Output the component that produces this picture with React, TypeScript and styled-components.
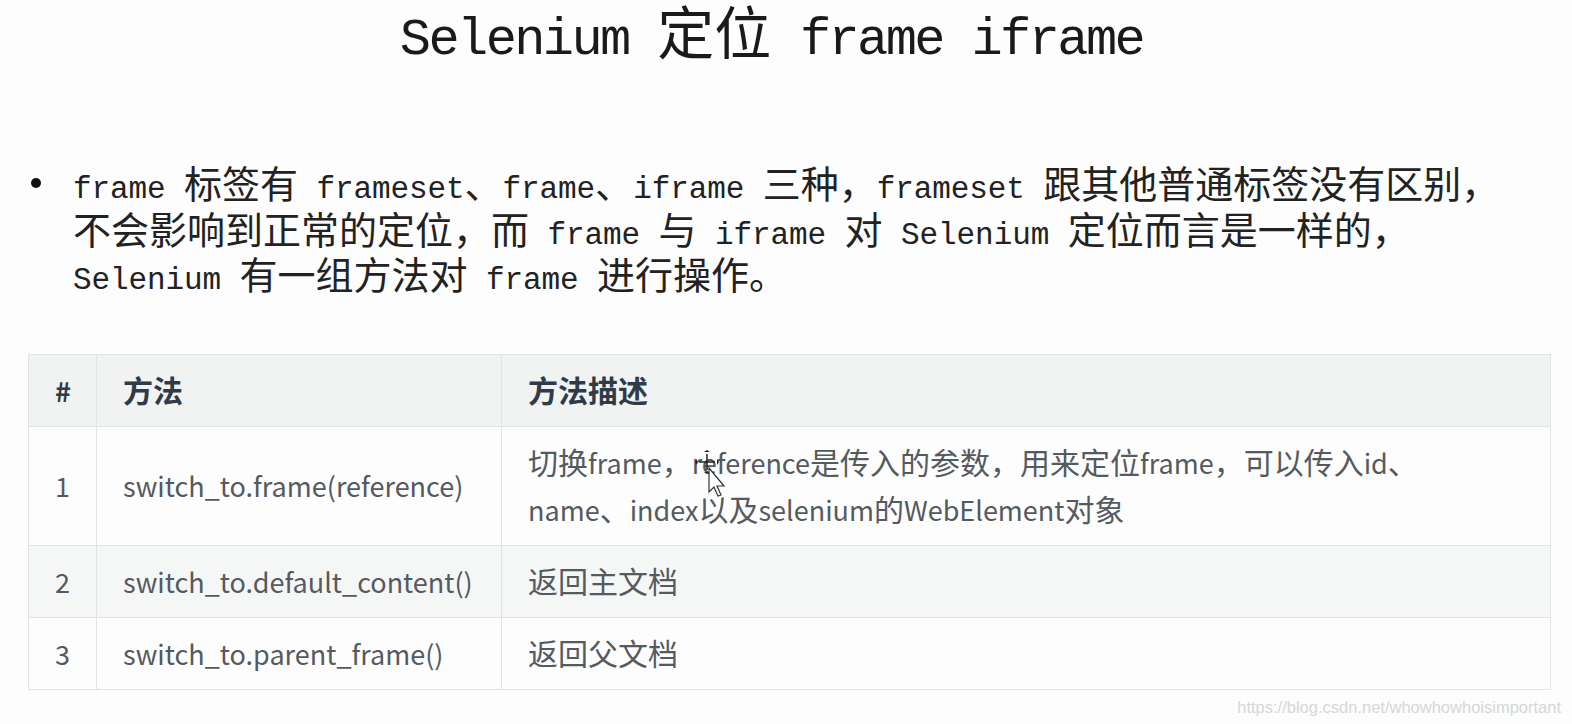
import React from 'react';
import styled, { createGlobalStyle } from 'styled-components';

const GlobalStyle = createGlobalStyle`
  html, body {
    margin: 0;
    padding: 0;
    background: #fcfdfc;
  }
  body {
    font-family: "Liberation Mono", "Noto Sans CJK SC", monospace;
    color: #1f1f1f;
  }
`;

const Page = styled.div`
  position: relative;
  width: 1572px;
  height: 724px;
  overflow: hidden;
  padding: 0 21px 0 28px;
  box-sizing: border-box;
`;

const Title = styled.h1`
  margin: 0;
  padding: 9px 36px 0 0;
  text-align: center;
  font-weight: normal;
  font-size: 52px;
  letter-spacing: -2.6px;
  line-height: 64px;
  color: #1a1a1a;
`;

// CJK runs are set a bit larger so they are twice the width of a latin cell
const Han = styled.span<{ $size: number }>`
  font-family: "Noto Sans CJK SC", sans-serif;
  font-size: ${(p) => p.$size}px;
  letter-spacing: 0;
  line-height: 0;
`;

const Bullets = styled.ul`
  margin: 94px 0 0;
  padding: 0 0 0 45px;
  list-style: none;
`;

const Bullet = styled.li`
  position: relative;
  font-size: 31px;
  letter-spacing: -0.1px;
  line-height: 45.5px;
  color: #222;

  &::before {
    content: "";
    position: absolute;
    left: -42px;
    top: 11px;
    width: 10px;
    height: 10px;
    border-radius: 50%;
    background: #111;
  }
`;

const Table = styled.table`
  margin-top: 50px;
  width: 1523px;
  border-collapse: collapse;
  table-layout: fixed;
  font-family: "Noto Sans CJK SC", "Noto Sans", sans-serif;
  font-size: 27px;
  line-height: 47px;
  border: 1px solid #e1e4e4;
`;

const Row = styled.tr<{ $shade?: boolean }>`
  background: ${(p) => (p.$shade ? '#f5f6f6' : '#fcfdfc')};
`;

const HeadRow = styled.tr`
  background: #f1f2f2;
`;

const Th = styled.th<{ $center?: boolean }>`
  border: 1px solid #e1e4e4;
  padding: 12px 26px;
  text-align: ${(p) => (p.$center ? 'center' : 'left')};
  font-weight: bold;
  color: #2f3b48;
`;

const Td = styled.td<{ $center?: boolean }>`
  border: 1px solid #e1e4e4;
  padding: 12px 26px;
  text-align: ${(p) => (p.$center ? 'center' : 'left')};
  color: #555a60;
  vertical-align: middle;
`;

const Watermark = styled.div`
  position: absolute;
  right: 11px;
  bottom: 7px;
  font-family: "Liberation Sans", Arial, sans-serif;
  font-size: 16.5px;
  color: #d6d8d8;
`;

const Cursor = styled.svg`
  position: absolute;
  left: 695px;
  top: 450px;
`;

const mix = (text: string, size: number) =>
  text.split(/([\u3000-\u303f\u4e00-\u9fff\uff00-\uffef]+)/).map((part, i) =>
    i % 2 === 1 ? (
      <Han key={i} $size={size}>
        {part}
      </Han>
    ) : (
      part
    )
  );

const methods = [
  {
    name: 'switch_to.frame(reference)',
    desc: ['切换frame，reference是传入的参数，用来定位frame，可以传入id、', 'name、index以及selenium的WebElement对象'],
  },
  { name: 'switch_to.default_content()', desc: ['返回主文档'] },
  { name: 'switch_to.parent_frame()', desc: ['返回父文档'] },
];

export default function App() {
  return (
    <Page>
      <GlobalStyle />
      <Title>{mix('Selenium 定位 frame iframe', 57)}</Title>

      <Bullets>
        <Bullet>
          {mix('frame 标签有 frameset、frame、iframe 三种，frameset 跟其他普通标签没有区别，', 38)}
          <br />
          {mix('不会影响到正常的定位，而 frame 与 iframe 对 Selenium 定位而言是一样的，', 38)}
          <br />
          {mix('Selenium 有一组方法对 frame 进行操作。', 38)}
        </Bullet>
      </Bullets>

      <Table>
        <colgroup>
          <col style={{ width: 68 }} />
          <col style={{ width: 405 }} />
          <col />
        </colgroup>
        <thead>
          <HeadRow>
            <Th $center>#</Th>
            <Th>{mix('方法', 30)}</Th>
            <Th>{mix('方法描述', 30)}</Th>
          </HeadRow>
        </thead>
        <tbody>
          {methods.map((m, i) => (
            <Row key={m.name} $shade={i === 1}>
              <Td $center>{i + 1}</Td>
              <Td>{m.name}</Td>
              <Td>
                {m.desc.map((line, j) => (
                  <React.Fragment key={j}>
                    {j > 0 && <br />}
                    {mix(line, 30)}
                  </React.Fragment>
                ))}
              </Td>
            </Row>
          ))}
        </tbody>
      </Table>

      <Cursor width="36" height="48" viewBox="0 0 36 48">
        <g stroke="#222" strokeWidth="1.5" fill="none">
          <path d="M12 4 V20 M4 12 H20" />
        </g>
        <path d="M9 2 L12 0 L15 2 Z M9 22 L12 24 L15 22 Z M2 9 L0 12 L2 15 Z M22 9 L24 12 L22 15 Z" fill="#222" />
        <path d="M14 18 L14 42 L19 37 L23 46 L26 45 L22 36 L29 36 Z" fill="#fff" stroke="#333" strokeWidth="1.2" />
      </Cursor>

      <Watermark>https://blog.csdn.net/whowhowhoisimportant</Watermark>
    </Page>
  );
}
